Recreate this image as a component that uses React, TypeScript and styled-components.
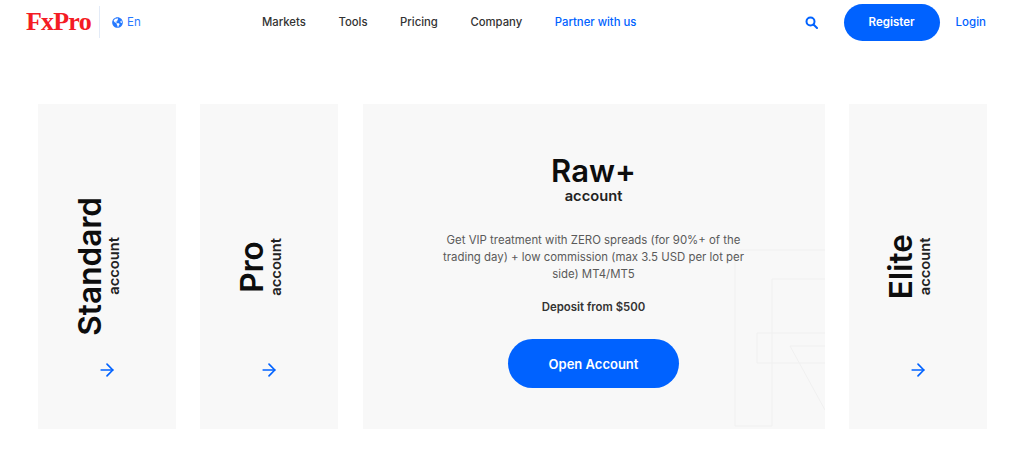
import { FC } from 'react'
import styled, { createGlobalStyle } from 'styled-components'
import { ArrowRight } from 'lucide-react'
import { FaGlobeAmericas } from 'react-icons/fa'

const BLUE = '#0062ff'

const GlobalStyle = createGlobalStyle`
  html, body {
    margin: 0;
    padding: 0;
    background: #fff;
    font-family: Inter, "Liberation Sans", sans-serif;
    color: #111;
  }
  * { box-sizing: border-box; }
`

const Page = styled.div`
  width: 1024px;
  height: 474px;
  overflow: hidden;
`

const Header = styled.header`
  display: flex;
  align-items: center;
  height: 43px;
  padding: 1px 38px 0 26px;
`

const Logo = styled.a`
  width: 74px;
  height: 32px;
  display: flex;
  align-items: center;
  border-right: 1px solid #e3ebf7;
  font-family: "Liberation Serif", serif;
  font-weight: 700;
  font-size: 26px;
  letter-spacing: -0.8px;
  color: #f41c24;
`

const Lang = styled.a`
  display: flex;
  align-items: center;
  gap: 4px;
  margin-left: 12px;
  width: 150px;
  font-size: 11.5px;
  color: ${BLUE};
  opacity: 0.85;
`

const Nav = styled.nav`
  display: flex;
  gap: 32.6px;
`

const NavLink = styled.a<{ $accent?: boolean }>`
  font-size: 11.3px;
  font-weight: 500;
  color: ${(p) => (p.$accent ? BLUE : '#333')};
`

const Actions = styled.div`
  display: flex;
  align-items: center;
  margin-left: auto;
`

const SearchIcon = styled.svg`
  width: 13px;
  height: 13px;
  margin-right: 26px;
`

const RegisterButton = styled.button`
  width: 96px;
  height: 37px;
  border: 0;
  border-radius: 19px;
  background: ${BLUE};
  color: #fff;
  font-family: inherit;
  font-size: 11.5px;
  font-weight: 600;
`

const LoginLink = styled.a`
  margin-left: 16px;
  font-size: 11.5px;
  font-weight: 500;
  color: ${BLUE};
`

const Cards = styled.main`
  display: flex;
  gap: 24px;
  height: 325px;
  margin: 61px 0 0 38px;
`

const Card = styled.a`
  flex: 0 0 138px;
  display: grid;
  grid-template-rows: 1fr auto 1fr;
  justify-items: center;
  background: #f8f8f8;
`

const SideHeading = styled.div`
  grid-row: 2;
  display: flex;
  align-items: center;
  margin-right: 18px;
  writing-mode: vertical-rl;
  transform: rotate(180deg);
  flex-direction: column;
  gap: 2px;
`

const SideTitle = styled.span`
  font-size: 31.6px;
  line-height: 30px;
  font-weight: 600;
  color: #0d0d0d;
`

const SideSub = styled.span`
  font-size: 14.7px;
  line-height: 14px;
  font-weight: 600;
  color: #222;
`

const SideArrow = styled(ArrowRight)`
  grid-row: 3;
  align-self: end;
  margin-bottom: 49px;
  color: ${BLUE};
`

const ActiveCard = styled.section`
  position: relative;
  flex: 0 0 462px;
  margin-left: 1px;
  display: flex;
  flex-direction: column;
  align-items: center;
  padding: 49px 1px 0 0;
  background: #f8f8f8;
  overflow: hidden;
`

const Watermark = styled.svg`
  position: absolute;
  left: 0;
  top: 0;
  width: 462px;
  height: 325px;
  fill: none;
  stroke: #f0f0f0;
  stroke-width: 1;
`

const ActiveTitle = styled.h2`
  position: relative;
  margin: 0;
  font-size: 31px;
  line-height: 36px;
  font-weight: 600;
  color: #0d0d0d;
`

const ActiveSub = styled.div`
  position: relative;
  font-size: 14.7px;
  line-height: 14px;
  font-weight: 600;
  color: #222;
`

const Description = styled.p`
  position: relative;
  width: 310px;
  margin: 29px 0 0;
  text-align: center;
  font-size: 11.4px;
  line-height: 17px;
  color: #5a5a5a;
`

const Deposit = styled.div`
  position: relative;
  margin-top: 16px;
  font-size: 11.4px;
  line-height: 17px;
  font-weight: 600;
  color: #333;
`

const OpenButton = styled.button`
  position: relative;
  width: 171px;
  height: 49px;
  margin-top: 23px;
  border: 0;
  border-radius: 25px;
  background: ${BLUE};
  color: #fff;
  font-family: inherit;
  font-size: 13px;
  font-weight: 600;
`

const SideCard: FC<{ title: string }> = ({ title }) => (
  <Card>
    <SideHeading>
      <SideTitle>{title}</SideTitle>
      <SideSub>account</SideSub>
    </SideHeading>
    <SideArrow size={20} strokeWidth={2} />
  </Card>
)

const App: FC = () => (
  <Page>
    <GlobalStyle />
    <Header>
      <Logo>FxPro</Logo>
      <Lang>
        <FaGlobeAmericas size={11} />
        En
      </Lang>
      <Nav>
        <NavLink>Markets</NavLink>
        <NavLink>Tools</NavLink>
        <NavLink>Pricing</NavLink>
        <NavLink>Company</NavLink>
        <NavLink $accent>Partner with us</NavLink>
      </Nav>
      <Actions>
        <SearchIcon viewBox="0 0 13 13" fill="none" stroke={BLUE} strokeWidth="2">
          <circle cx="5.5" cy="5.5" r="4" />
          <path d="M8.5 8.5 12 12" strokeLinecap="round" />
        </SearchIcon>
        <RegisterButton>Register</RegisterButton>
        <LoginLink>Login</LoginLink>
      </Actions>
    </Header>
    <Cards>
      <SideCard title="Standard" />
      <SideCard title="Pro" />
      <ActiveCard>
        <Watermark viewBox="0 0 462 325">
          <path d="M372 146V322H409V175H462" />
          <path d="M372 146H462" />
          <path d="M394 229H462M394 229V259H462" />
          <path d="M427 242H462M427 242 462 306" />
        </Watermark>
        <ActiveTitle>Raw+</ActiveTitle>
        <ActiveSub>account</ActiveSub>
        <Description>
          Get VIP treatment with ZERO spreads (for 90%+ of the trading day) + low commission (max 3.5 USD per lot per
          side) MT4/MT5
        </Description>
        <Deposit>Deposit from $500</Deposit>
        <OpenButton>Open Account</OpenButton>
      </ActiveCard>
      <SideCard title="Elite" />
    </Cards>
  </Page>
)

export default App
